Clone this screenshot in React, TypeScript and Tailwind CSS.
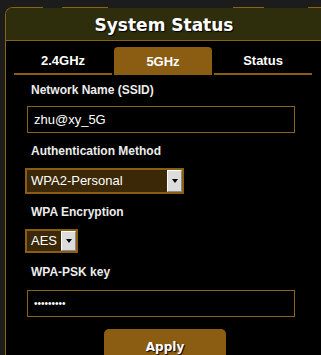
import React from "react";

function Select({ label, width }: { label: string; width: number }) {
  return (
    <div
      className="flex items-stretch border-2 border-[#8a5d12] bg-[#3a2806] h-full"
      style={{ width }}
    >
      <div className="flex-1 flex items-center pl-[4px] text-[13px] text-white font-['Liberation_Sans',Arial,sans-serif]">
        {label}
      </div>
      <div className="w-[15px] bg-[#dcdcdc] border-l border-t border-l-[#ffffff] border-t-[#ffffff] border-r border-b border-r-[#8a8a8a] border-b-[#8a8a8a] flex items-center justify-center">
        <div className="w-0 h-0 border-l-[3.5px] border-r-[3.5px] border-t-[4px] border-l-transparent border-r-transparent border-t-black" />
      </div>
    </div>
  );
}

export default function App() {
  const label =
    "text-[12px] leading-[14px] font-bold text-[#ececec] font-['Liberation_Sans',Arial,sans-serif]";
  return (
    <div className="w-[321px] h-[355px] overflow-hidden bg-[#1c1c1c] relative">
      <div className="h-[7px]" />
      <div className="ml-[5px] w-[320px] h-[348px] relative border-l border-t border-[#8a6414] rounded-tl-[8px] bg-black">
        <div className="absolute top-[-1px] left-[37px] w-[19px] h-[1px] bg-[#1c1c1c]" />
        <div className="absolute top-[-1px] left-[102px] w-[125px] h-[1px] bg-[#1c1c1c]" />
        <div className="absolute top-[-1px] left-[258px] w-[44px] h-[1px] bg-[#1c1c1c]" />
        <div className="h-[33px] bg-[#2f2e0c] rounded-tl-[7px] border-b border-[#8a6414] flex items-center justify-center pt-[3px]">
          <span className="text-[17px] font-bold text-white font-['DejaVu_Sans',Verdana,sans-serif] [text-shadow:1px_1px_1px_#000] pr-[3px]">
            System Status
          </span>
        </div>
        <div className="flex flex-col">
          <div className="mt-[6px] ml-[8px] flex gap-[2px] font-['Liberation_Sans',Arial,sans-serif] text-[13px] font-bold text-white">
            <div className="w-[98px] h-[28px] flex items-center justify-center border-b-2 border-[#8a5d12] pt-[1px]">
              2.4GHz
            </div>
            <div className="w-[98px] h-[28px] flex items-center justify-center bg-[#8a5d12] rounded-t-[4px] pt-[2px]">
              5GHz
            </div>
            <div className="w-[98px] h-[28px] flex items-center justify-center border-b-2 border-[#8a5d12] pt-[1px]">
              Status
            </div>
          </div>

          <div className={`${label} mt-[8px] ml-[25px]`}>Network Name (SSID)</div>
          <div className="mt-[9px] ml-[21px] w-[268px] h-[27px] border border-[#8a6420] bg-black flex items-center pl-[6px] text-[13px] text-white font-['Liberation_Sans',Arial,sans-serif]">
            zhu@xy_5G
          </div>

          <div className={`${label} mt-[11px] ml-[25px]`}>Authentication Method</div>
          <div className="mt-[10px] ml-[19px] h-[26px]">
            <Select label="WPA2-Personal" width={159} />
          </div>

          <div className={`${label} mt-[11px] ml-[25px]`}>WPA Encryption</div>
          <div className="mt-[10px] ml-[19px] h-[24px]">
            <Select label="AES" width={53} />
          </div>

          <div className={`${label} mt-[12px] ml-[25px]`}>WPA-PSK key</div>
          <div className="mt-[11px] ml-[21px] w-[268px] h-[27px] border border-[#8a6420] bg-black flex items-center pl-[6px] text-[10px] text-white font-['Liberation_Sans',Arial,sans-serif]">
            •••••••••
          </div>

          <div className="mt-[12px] ml-[98px] w-[122px] h-[32px] rounded-[5px] bg-[#8a5d12] flex justify-center pt-[11px]">
            <span className="text-[12px] leading-[14px] font-bold text-white font-['DejaVu_Sans',Verdana,sans-serif] [text-shadow:1px_1px_1px_#000]">
              Apply
            </span>
          </div>
        </div>
      </div>
    </div>
  );
}
